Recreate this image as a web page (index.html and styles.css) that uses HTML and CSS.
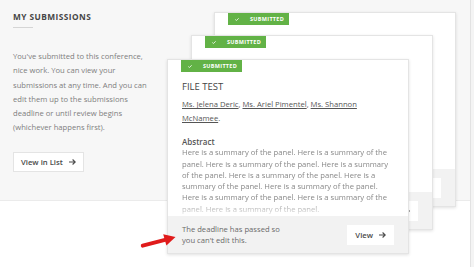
FILE: index.html
```html
<!DOCTYPE html>
<html lang="en">
<head>
  <meta charset="UTF-8">
  <title>My Submissions</title>
  <link rel="stylesheet" href="styles.css">
</head>
<body>
  <div class="page">
    <div class="intro">
      <h2>My Submissions</h2>
      <p>You've submitted to this conference, nice work. You can view your submissions at any time. And you can edit them up to the submissions deadline or until review begins (whichever happens first).</p>
      <a class="btn" href="#">View in List <svg class="arrow" width="7" height="6" viewBox="0 0 7 6"><path d="M0 3h6.2M3.6 0.5L6.2 3 3.6 5.5" fill="none" stroke="currentColor" stroke-width="1.1"/></svg></a>
    </div>

    <div class="stack">
      <!-- cards further back only show their badge and button edge -->
      <div class="card card-back">
        <span class="badge"><svg class="check" width="4" height="3" viewBox="0 0 4 3"><path d="M0.3 1.5l1.1 1 2.3-2.2" fill="none" stroke="#fff" stroke-width="0.8"/></svg>Submitted</span>
        <div class="card-body"></div>
        <div class="card-foot">
          <a class="btn" href="#">View <svg class="arrow" width="7" height="6" viewBox="0 0 7 6"><path d="M0 3h6.2M3.6 0.5L6.2 3 3.6 5.5" fill="none" stroke="currentColor" stroke-width="1.1"/></svg></a>
        </div>
      </div>

      <div class="card card-mid">
        <span class="badge"><svg class="check" width="4" height="3" viewBox="0 0 4 3"><path d="M0.3 1.5l1.1 1 2.3-2.2" fill="none" stroke="#fff" stroke-width="0.8"/></svg>Submitted</span>
        <div class="card-body"></div>
        <div class="card-foot">
          <a class="btn" href="#">View <svg class="arrow" width="7" height="6" viewBox="0 0 7 6"><path d="M0 3h6.2M3.6 0.5L6.2 3 3.6 5.5" fill="none" stroke="currentColor" stroke-width="1.1"/></svg></a>
        </div>
      </div>

      <div class="card card-front">
        <span class="badge"><svg class="check" width="4" height="3" viewBox="0 0 4 3"><path d="M0.3 1.5l1.1 1 2.3-2.2" fill="none" stroke="#fff" stroke-width="0.8"/></svg>Submitted</span>
        <div class="card-body">
          <h3>FILE TEST</h3>
          <p class="authors"><a href="#">Ms. Jelena Deric</a>, <a href="#">Ms. Ariel Pimentel</a>, <a href="#">Ms. Shannon</a><br><a href="#">McNamee</a>.</p>
          <h4>Abstract</h4>
          <p class="abstract">Here is a summary of the panel. Here is a summary of the panel. Here is a summary of the panel. Here is a summary of the panel. Here is a summary of the panel. Here is a summary of the panel. Here is a summary of the panel. Here is a summary of the panel. Here is a summary of the panel. Here is a summary of the panel.</p>
        </div>
        <div class="card-foot">
          <span class="note">The deadline has passed so you can't edit this.</span>
          <a class="btn" href="#">View <svg class="arrow" width="7" height="6" viewBox="0 0 7 6"><path d="M0 3h6.2M3.6 0.5L6.2 3 3.6 5.5" fill="none" stroke="currentColor" stroke-width="1.1"/></svg></a>
        </div>
      </div>
    </div>

    <!-- annotation arrow pointing at the deadline note -->
    <svg class="pointer" width="40" height="20" viewBox="0 0 40 20">
      <path d="M4.7 15.7L27 9.8" stroke="#e01b1b" stroke-width="3.8" stroke-linecap="round"/>
      <path d="M37.5 7.1L25.2 4.2 28.4 15.6Z" fill="#e01b1b"/>
    </svg>
  </div>
</body>
</html>
```

FILE: styles.css
```css
* {
  box-sizing: border-box;
}
body {
  margin: 0;
  background: #f4f4f4;
  font-family: "Open Sans", "Liberation Sans", sans-serif;
  color: #555;
}
.page {
  position: relative;
  display: flex;
  width: 471px;
  min-height: 267px;
  border-right: 1px solid #e2e2e2;
  background: linear-gradient(#f7f7f7 0 200px, #ebebeb 200px 201px, #fff 201px);
}
.intro {
  flex: 0 0 167px;
  padding: 11px 14px 0 13px;
}
.intro h2 {
  margin: 0;
  font-size: 8.3px;
  line-height: 11px;
  font-weight: 700;
  letter-spacing: 0.45px;
  text-transform: uppercase;
  color: #464646;
}
.intro h2::after {
  content: "";
  display: block;
  width: 20px;
  height: 1px;
  margin-top: 5px;
  background: #d5d5d5;
}
.intro p {
  margin: 21px 0 13px;
  font-size: 7.65px;
  line-height: 14.3px;
  color: #7e7e7e;
}
.btn {
  display: inline-flex;
  align-items: center;
  gap: 6px;
  height: 20px;
  padding: 0 7px;
  border: 1px solid #e4e4e4;
  background: #fff;
  color: #4a4a4a;
  font-size: 7.7px;
  font-weight: 600;
  text-decoration: none;
}
.stack {
  display: grid;
  align-self: start;
  margin-top: 12px;
}
.card {
  grid-area: 1 / 1;
  display: flex;
  flex-direction: column;
  width: 242px;
  height: 195px;
  background: #fff;
  border: 1px solid #e4e4e4;
  box-shadow: 0 1px 3px rgba(0,0,0,0.12);
}
.card-back {
  margin-left: 47px;
}
.card-mid {
  margin: 23px 0 0 24px;
}
.card-front {
  margin-top: 47px;
}
.badge {
  display: flex;
  align-items: center;
  width: 61px;
  height: 12px;
  margin-left: 13px;
  padding-left: 7px;
  background: #62b246;
  color: #fff;
  font-size: 5.5px;
  font-weight: 700;
  letter-spacing: 0.3px;
  text-transform: uppercase;
}
.check {
  margin-right: 11px;
}
.card-body {
  flex: 1;
  overflow: hidden;
  padding: 8px 14px 0;
}
.card-body h3 {
  margin: 0;
  font-size: 9.5px;
  line-height: 13px;
  font-weight: 400;
  color: #444;
}
.authors {
  margin: 5px 0 0;
  font-size: 7.65px;
  line-height: 13.5px;
  color: #555;
}
.authors a {
  color: inherit;
}
.card-body h4 {
  margin: 11px 0 0;
  font-size: 8px;
  line-height: 11.3px;
  font-weight: 600;
  color: #555;
}
.abstract {
  width: 209px;
  margin: 0;
  font-size: 7.65px;
  line-height: 11.3px;
  color: #888;
  -webkit-mask-image: linear-gradient(#000 54px, rgba(0,0,0,0.1) 70px);
  mask-image: linear-gradient(#000 54px, rgba(0,0,0,0.1) 70px);
}
.card-foot {
  display: flex;
  align-items: center;
  justify-content: space-between;
  height: 37px;
  padding: 0 14px;
  background: #f2f2f2;
}
.card-foot .btn {
  margin-left: auto;
  border-color: #fff;
}
.note {
  max-width: 105px;
  font-size: 7.65px;
  line-height: 10.7px;
  color: #6a6a6a;
}
.pointer {
  position: absolute;
  left: 138px;
  top: 230px;
}
```
